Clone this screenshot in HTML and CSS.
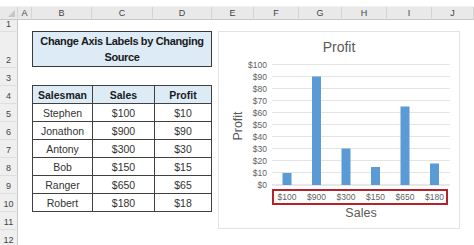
FILE: index.html
```html
<!DOCTYPE html>
<html lang="en">

<head>
    <meta charset="UTF-8">
    <title>Change Axis Labels</title>
    <link rel="stylesheet" href="styles.css">
</head>

<body>
    <div class="sheet">
        <div class="corner"><span class="tri"></span></div>
        <div class="colhead">A</div>
        <div class="colhead">B</div>
        <div class="colhead">C</div>
        <div class="colhead">D</div>
        <div class="colhead">E</div>
        <div class="colhead">F</div>
        <div class="colhead">G</div>
        <div class="colhead">H</div>
        <div class="colhead">I</div>
        <div class="colhead">J</div>
        <div class="colhead last"></div>

        <div class="rowhead r1">1</div>
        <div class="rowhead r2">2</div>
        <div class="rowhead r3">3</div>
        <div class="rowhead r4">4</div>
        <div class="rowhead r5">5</div>
        <div class="rowhead r6">6</div>
        <div class="rowhead r7">7</div>
        <div class="rowhead r8">8</div>
        <div class="rowhead r9">9</div>
        <div class="rowhead r10">10</div>
        <div class="rowhead r11">11</div>
        <div class="rowhead r12">12</div>

        <div class="title-box">Change Axis Labels by Changing<br>Source</div>

        <table class="data">
            <tr><th>Salesman</th><th>Sales</th><th>Profit</th></tr>
            <tr><td>Stephen</td><td>$100</td><td>$10</td></tr>
            <tr><td>Jonathon</td><td>$900</td><td>$90</td></tr>
            <tr><td>Antony</td><td>$300</td><td>$30</td></tr>
            <tr><td>Bob</td><td>$150</td><td>$15</td></tr>
            <tr><td>Ranger</td><td>$650</td><td>$65</td></tr>
            <tr><td>Robert</td><td>$180</td><td>$18</td></tr>
        </table>

        <!-- chart floats over the cells like in excel -->
        <div class="chart">
            <svg width="242" height="198" viewBox="0 0 242 198">
                <text class="ctitle" x="121" y="21" text-anchor="middle">Profit</text>

                <g class="grid">
                    <line x1="54" y1="33.5" x2="232" y2="33.5"/>
                    <line x1="54" y1="45.5" x2="232" y2="45.5"/>
                    <line x1="54" y1="57.5" x2="232" y2="57.5"/>
                    <line x1="54" y1="69.5" x2="232" y2="69.5"/>
                    <line x1="54" y1="81.5" x2="232" y2="81.5"/>
                    <line x1="54" y1="93.5" x2="232" y2="93.5"/>
                    <line x1="54" y1="105.5" x2="232" y2="105.5"/>
                    <line x1="54" y1="117.5" x2="232" y2="117.5"/>
                    <line x1="54" y1="129.5" x2="232" y2="129.5"/>
                    <line x1="54" y1="141.5" x2="232" y2="141.5"/>
                    <line class="base" x1="54" y1="154" x2="232" y2="154"/>
                </g>

                <g class="ylab" text-anchor="end">
                    <text x="49" y="36.5">$100</text>
                    <text x="49" y="48.5">$90</text>
                    <text x="49" y="60.5">$80</text>
                    <text x="49" y="72.5">$70</text>
                    <text x="49" y="84.5">$60</text>
                    <text x="49" y="96.5">$50</text>
                    <text x="49" y="108.5">$40</text>
                    <text x="49" y="120.5">$30</text>
                    <text x="49" y="132.5">$20</text>
                    <text x="49" y="144.5">$10</text>
                    <text x="49" y="157">$0</text>
                </g>

                <g class="bars">
                    <rect x="64.5" y="142" width="9" height="12"/>
                    <rect x="94" y="45.5" width="9" height="108.5"/>
                    <rect x="123.5" y="117.5" width="9" height="36.5"/>
                    <rect x="153" y="136" width="9" height="18"/>
                    <rect x="182.5" y="75.5" width="9" height="78.5"/>
                    <rect x="212" y="132.5" width="9" height="21.5"/>
                </g>

                <g class="xlab" text-anchor="middle">
                    <text x="69" y="168.5">$100</text>
                    <text x="98.5" y="168.5">$900</text>
                    <text x="128" y="168.5">$300</text>
                    <text x="157.5" y="168.5">$150</text>
                    <text x="187" y="168.5">$650</text>
                    <text x="216.5" y="168.5">$180</text>
                </g>

                <rect class="hilite" x="55" y="159" width="174" height="14"/>

                <text class="axt" x="143" y="186" text-anchor="middle">Sales</text>
                <text class="axt" x="0" y="0" text-anchor="middle" transform="translate(24 95) rotate(-90)">Profit</text>
            </svg>
        </div>
    </div>
</body>

</html>
```

FILE: styles.css
```css
* {
    margin: 0;
    padding: 0;
    box-sizing: border-box;
}

body {
    background: #ffffff;
    font-family: "Liberation Sans", Arial, sans-serif;
    color: #262626;
    overflow: hidden;
}

.sheet {
    position: relative;
    margin-top: 6px;
    display: grid;
    grid-template-columns: 18px 14px 60px 61px 59px 42px 45px 43px 45px 45px 1fr;
    grid-template-rows: 13px 12px 36px 18px repeat(9, 18px);
    border-top: 1px solid #f2f2f2;
}

.corner {
    grid-column: 1;
    grid-row: 1;
    background: #e9e9e9;
    border-right: 1px solid #d4d4d4;
    border-bottom: 1px solid #c8c8c8;
    position: relative;
}

.tri {
    position: absolute;
    right: 2px;
    bottom: 2px;
    width: 0;
    height: 0;
    border-left: 7px solid transparent;
    border-bottom: 7px solid #c6c6c6;
}

.colhead {
    grid-row: 1;
    background: #e9e9e9;
    border-right: 1px solid #d4d4d4;
    border-bottom: 1px solid #c8c8c8;
    font-size: 9px;
    color: #444;
    text-align: center;
    line-height: 12px;
}

.colhead.last {
    border-right: none;
}

.rowhead {
    grid-column: 1;
    background: #efefef;
    border-right: 1px solid #c8c8c8;
    border-bottom: 1px solid #dedede;
    font-size: 9px;
    color: #444;
    text-align: center;
    display: flex;
    align-items: flex-end;
    justify-content: center;
    padding-bottom: 2px;
}

.r1 { grid-row: 2; }
.r2 { grid-row: 3; }
.r3 { grid-row: 4; }
.r4 { grid-row: 5; }
.r5 { grid-row: 6; }
.r6 { grid-row: 7; }
.r7 { grid-row: 8; }
.r8 { grid-row: 9; }
.r9 { grid-row: 10; }
.r10 { grid-row: 11; }
.r11 { grid-row: 12; }
.r12 { grid-row: 13; }

.title-box {
    grid-column: 3 / 6;
    grid-row: 3;
    margin-top: -1px;
    margin-bottom: 1px;
    background: #ddebf7;
    border: 1.5px solid #3a3a3a;
    font-weight: bold;
    font-size: 11px;
    line-height: 16px;
    text-align: center;
    color: #1a1a1a;
    padding-top: 1px;
    letter-spacing: -0.35px;
    white-space: nowrap;
    overflow: hidden;
}

.data {
    grid-column: 3 / 6;
    grid-row: 5 / 12;
    border-collapse: collapse;
    width: 100%;
    height: 125px;
    margin-top: -1px;
    font-size: 10.5px;
    color: #333;
}

.data th,
.data td {
    border: 1.5px solid #404040;
    text-align: center;
    height: 18px;
}

.data th {
    background: #ddebf7;
    font-weight: bold;
    color: #1a1a1a;
}

.data td:nth-child(1),
.data th:nth-child(1) { width: 60px; }
.data td:nth-child(2),
.data th:nth-child(2) { width: 62px; }

.chart {
    position: absolute;
    left: 218px;
    top: 24px;
    width: 242px;
    height: 198px;
    background: #fff;
    border: 1px solid #e3e3e3;
}

.chart svg {
    display: block;
    position: absolute;
    left: -1px;
    top: -1px;
    font-family: "Liberation Sans", Arial, sans-serif;
}

.ctitle {
    font-size: 14px;
    fill: #5a5a5a;
}

.grid line {
    stroke: #e4e4e4;
    stroke-width: 1;
}

.grid line.base {
    stroke: #d0d0d0;
}

.ylab text,
.xlab text {
    font-size: 8.5px;
    fill: #5f5f5f;
}

.bars rect {
    fill: #5b9bd5;
}

.hilite {
    fill: none;
    stroke: #b8202a;
    stroke-width: 2;
}

.axt {
    font-size: 12.5px;
    fill: #5a5a5a;
}
```
